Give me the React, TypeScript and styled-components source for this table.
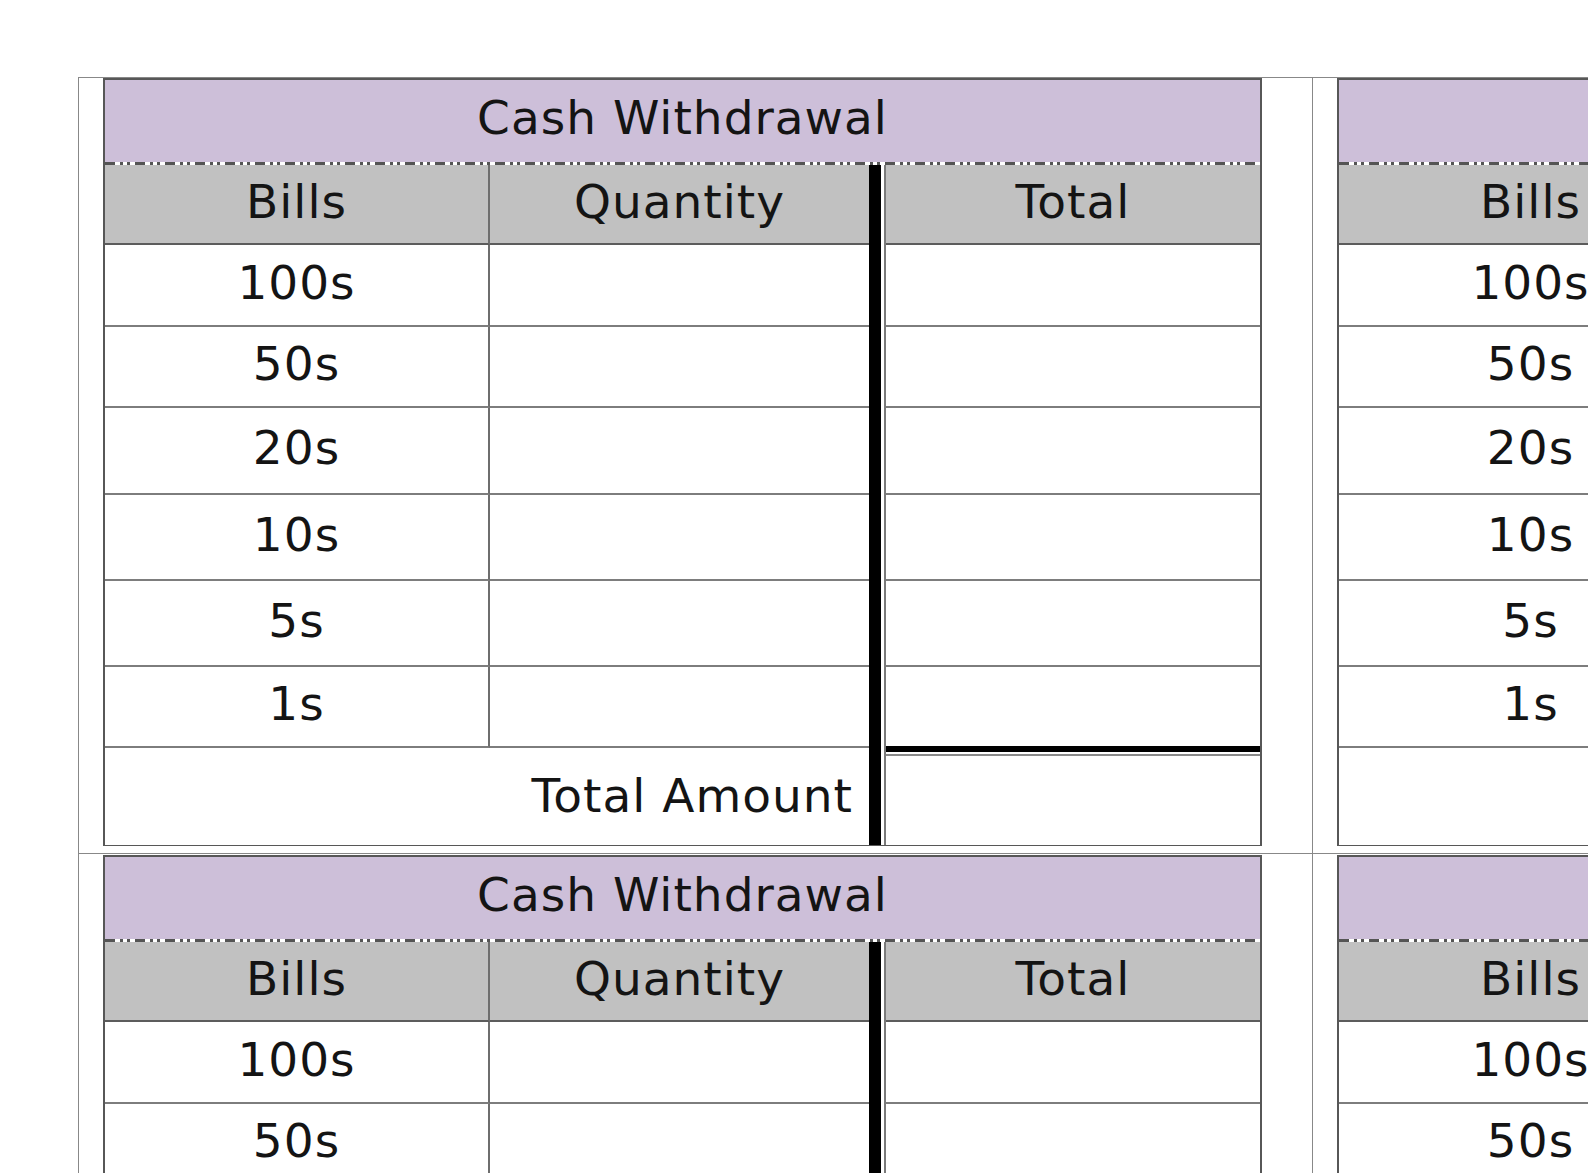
import * as React from 'react'
import styled, { createGlobalStyle } from 'styled-components'

const bills = ['100s', '50s', '20s', '10s', '5s', '1s']
const rowHeights = [80, 82, 81, 87, 86, 86, 81, 97]

const GlobalStyle = createGlobalStyle`
  html, body {
    margin: 0;
    padding: 0;
    background: #fff;
    overflow: hidden;
  }
  body {
    font-family: 'DejaVu Sans', 'Liberation Sans', sans-serif;
    color: #141414;
  }
`

const CashSlip = () => (
  <Slip>
    <Title>Cash Withdrawal</Title>
    <Dash />
    <Grid>
      <Divider />
      <HeadCell $line>Bills</HeadCell>
      <HeadCell>Quantity</HeadCell>
      <HeadCell>Total</HeadCell>
      {bills.map((b, i) => (
        <React.Fragment key={b}>
          <Cell $line>{b}</Cell>
          <Cell />
          <Cell $heavy={i === bills.length - 1} />
        </React.Fragment>
      ))}
      <AmountLabel>Total Amount</AmountLabel>
      <AmountValue />
    </Grid>
  </Slip>
)

const App = () => (
  <>
    <GlobalStyle />
    <Sheet>
      {[0, 1, 2, 3].map((n) => (
        <Slot key={n} $first={n < 2}>
          <CashSlip />
        </Slot>
      ))}
    </Sheet>
  </>
)

const Sheet = styled.div`
  display: grid;
  grid-template-columns: repeat(2, 1234px);
  grid-auto-rows: 776px;
  margin: 77px 0 0 78px;
  width: max-content;
  border-top: 1px solid #888;
  border-left: 1px solid #888;
`

const Slot = styled.div<{ $first: boolean }>`
  box-sizing: border-box;
  border-right: 1px solid #888;
  border-bottom: 1px solid #888;
  padding: ${(p) => (p.$first ? '0' : '1px')} 0 0 24px;
`

const Slip = styled.div`
  width: 1159px;
  box-sizing: border-box;
  border: 2px solid #575757;
  border-bottom-width: 1px;
  display: flex;
  flex-direction: column;
`

const Title = styled.div`
  height: 82px;
  background: #cdbfd9;
  display: flex;
  align-items: center;
  justify-content: center;
  padding-bottom: 7px;
  box-sizing: border-box;
  font-size: 47px;
  letter-spacing: 1px;
`

const Dash = styled.div`
  height: 3px;
  background: repeating-linear-gradient(
    to right,
    #555 0 10px,
    #fff 10px 15px,
    #555 15px 18px,
    #fff 18px 22px,
    #555 22px 25px,
    #fff 25px 30px
  );
`

const Grid = styled.div`
  display: grid;
  grid-template-columns: 385px 379px 17px 1fr;
  grid-template-rows: ${rowHeights.map((h) => `${h}px`).join(' ')};
`

const Divider = styled.div`
  grid-column: 3;
  grid-row: 1 / -1;
  background: linear-gradient(to right, #000 0 12px, #fff 12px 15px, #7a7a7a 15px 17px);
`

const Cell = styled.div<{ $line?: boolean; $heavy?: boolean }>`
  box-sizing: border-box;
  display: flex;
  align-items: center;
  justify-content: center;
  padding-bottom: 6px;
  font-size: 47px;
  letter-spacing: 1px;
  border-bottom: 2px solid ${(p) => (p.$heavy ? '#000' : '#7d7d7d')};
  border-right: ${(p) => (p.$line ? '2px solid #6e6e6e' : 'none')};
`

const HeadCell = styled(Cell)`
  background: #c1c1c1;
  border-bottom-color: #5c5c5c;
`

const AmountLabel = styled.div`
  grid-column: 1 / span 2;
  display: flex;
  align-items: center;
  justify-content: flex-end;
  padding: 0 16px 2px 0;
  font-size: 47px;
  letter-spacing: 1px;
`

const AmountValue = styled.div`
  border-top: 4px solid #000;
  box-shadow: inset 0 2px 0 #fff, inset 0 4px 0 #8a8a8a;
`

export default App
